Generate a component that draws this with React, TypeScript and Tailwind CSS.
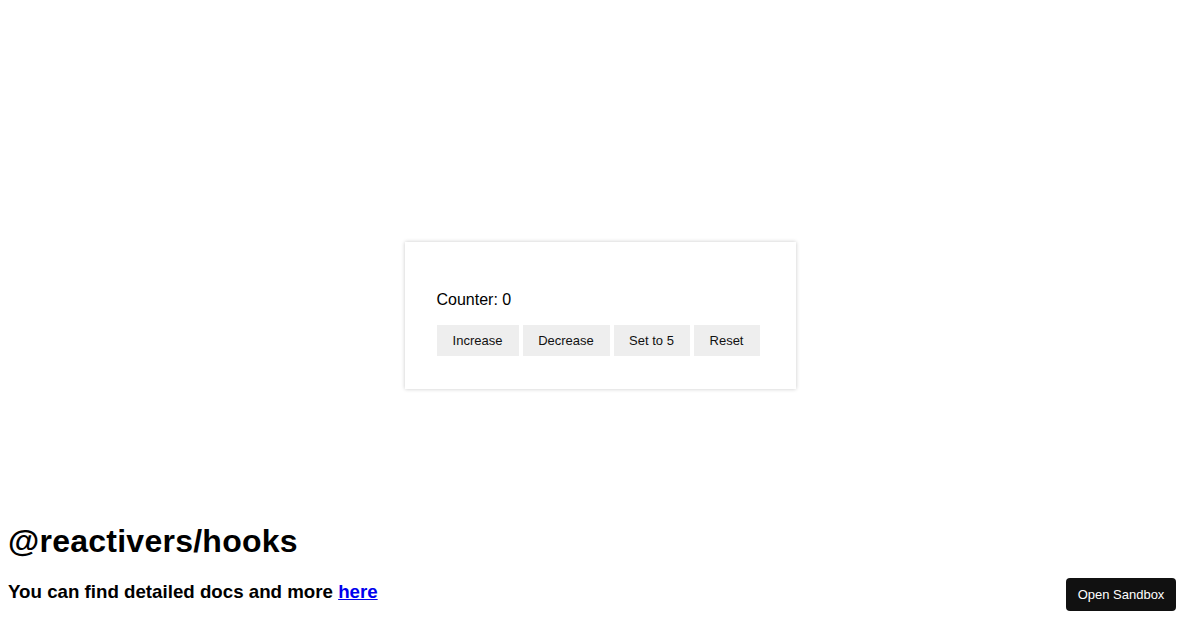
import { useState } from 'react';

export default function App() {
  const [count, setCount] = useState(0);

  return (
    <div className="relative h-[630px] flex flex-col bg-white text-black font-['Liberation_Sans',Arial,sans-serif] pb-[8px]">
      {/* Demo card */}
      <div className="flex-1 flex justify-center items-start pt-[242px]">
        <div className="w-[391px] h-[147px] bg-white shadow-[0_0_4px_rgba(0,0,0,0.22)] px-8 pt-[49px]">
          <p className="text-[16px] leading-[18px]">Counter: {count}</p>
          <div className="flex gap-1 mt-[16px]">
            <button onClick={() => setCount(count + 1)} className="h-[31px] w-[82px] bg-[#eeeeee] text-[13px] text-[#111]">
              Increase
            </button>
            <button onClick={() => setCount(count - 1)} className="h-[31px] w-[87px] bg-[#eeeeee] text-[13px] text-[#111]">
              Decrease
            </button>
            <button onClick={() => setCount(5)} className="h-[31px] w-[76px] bg-[#eeeeee] text-[13px] text-[#111]">
              Set to 5
            </button>
            <button onClick={() => setCount(0)} className="h-[31px] w-[66px] bg-[#eeeeee] text-[13px] text-[#111]">
              Reset
            </button>
          </div>
        </div>
      </div>

      {/* Package info */}
      <h1 className="px-2 text-[32px] leading-[37px] font-bold tracking-[0.25px] mb-[21px]">@reactivers/hooks</h1>
      <h3 className="px-2 text-[18.72px] leading-[22px] font-bold mb-[19px]">
        You can find detailed docs and more{' '}
        <a href="#" className="text-[#0000ee] underline">here</a>
      </h3>

      <button className="absolute right-[24px] bottom-[19px] h-[33px] w-[110px] rounded-[4px] bg-[#111111] text-white text-[13px]">
        Open Sandbox
      </button>
    </div>
  );
}
